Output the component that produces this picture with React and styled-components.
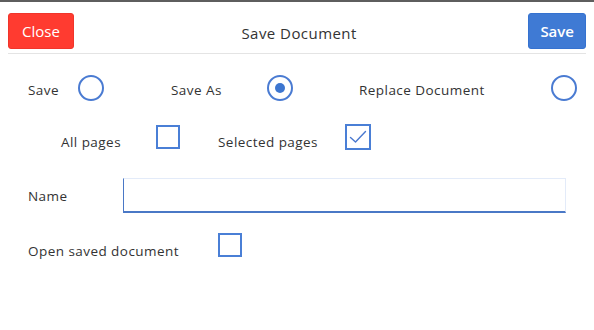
import React from "react";
import styled, { createGlobalStyle } from "styled-components";

const Global = createGlobalStyle`
  html, body { margin: 0; padding: 0; background: #ffffff; }
  body { font-family: "Open Sans", "Noto Sans", sans-serif; color: #333; }
`;

const Dialog = styled.div`
  width: 594px;
  height: 330px;
  box-sizing: border-box;
  border-top: 2px solid #5e5e5e;
  background: #fff;
  display: flex;
  flex-direction: column;
`;

const Header = styled.div`
  margin: 0 8px;
  height: 52px;
  box-sizing: border-box;
  border-bottom: 1px solid #e4e4e4;
  display: flex;
  align-items: flex-start;
  justify-content: space-between;
  padding-top: 11px;
`;

const Title = styled.div`
  font-size: 15px;
  color: #333;
  letter-spacing: 0.45px;
  padding-right: 4px;
  margin-top: 10px;
`;

const Button = styled.button`
  height: 36px;
  padding: 0 ${(p) => p.$pad}px;
  border: 1px solid ${(p) => p.$border};
  border-radius: 3px;
  background: ${(p) => p.$bg};
  color: #fff;
  font-family: "Open Sans", sans-serif;
  font-size: 15px;
  font-weight: ${(p) => p.$weight};
  cursor: pointer;
`;

const Body = styled.div`
  display: flex;
  flex-direction: column;
`;

const Row = styled.div`
  display: flex;
  align-items: center;
  height: ${(p) => p.$h}px;
  margin-top: ${(p) => p.$mt}px;
  padding-left: ${(p) => p.$pl}px;
`;

const Label = styled.span`
  font-size: 13.5px;
  color: #333;
  letter-spacing: 0.45px;
  width: ${(p) => (p.$w ? `${p.$w}px` : "auto")};
  margin-top: ${(p) => p.$dy || 0}px;
  flex-shrink: 0;
`;

const Radio = styled.span`
  width: 26px;
  height: 26px;
  box-sizing: border-box;
  border-radius: 50%;
  border: 2px solid #4a7bd2;
  display: flex;
  align-items: center;
  justify-content: center;
  flex-shrink: 0;
  margin-right: ${(p) => p.$mr}px;
  &::after {
    content: "";
    width: 10px;
    height: 10px;
    border-radius: 50%;
    background: #3d76d0;
    display: ${(p) => (p.$checked ? "block" : "none")};
  }
`;

const Box = styled.span`
  width: ${(p) => p.$size}px;
  height: ${(p) => p.$size}px;
  box-sizing: border-box;
  border: 2px solid #4a7fd6;
  display: flex;
  align-items: center;
  justify-content: center;
  flex-shrink: 0;
  margin-right: ${(p) => p.$mr || 0}px;
`;

const Input = styled.input`
  width: 443px;
  height: 35px;
  box-sizing: border-box;
  border: 1px solid #e3ebf9;
  border-left: 1px solid #4a78c6;
  border-bottom: 2px solid #4a78c6;
  outline: none;
  background: #fff;
  padding: 0 8px;
  font-family: "Open Sans", sans-serif;
  font-size: 14px;
`;

const Check = () => (
  <svg width="22" height="22" viewBox="0 0 22 22" fill="none">
    <path d="M3.5 11.5 L8.5 16 L18.5 5.5" stroke="#4a78cf" strokeWidth="1.4" strokeLinecap="round" strokeLinejoin="round" />
  </svg>
);

export default function App() {
  return (
    <>
      <Global />
      <Dialog>
        <Header>
          <Button $bg="#ff3b30" $border="#f0352b" $pad={13} $weight={500}>Close</Button>
          <Title>Save Document</Title>
          <Button $bg="#3f7ad4" $border="#3572d0" $pad={11} $weight={600}>Save</Button>
        </Header>
        <Body>
          <Row $h={26} $mt={21} $pl={28}>
            <Label $w={50} $dy={3}>Save</Label>
            <Radio $mr={67} />
            <Label $w={96} $dy={3}>Save As</Label>
            <Radio $checked $mr={66} />
            <Label $w={192} $dy={3}>Replace Document</Label>
            <Radio $mr={0} />
          </Row>
          <Row $h={24} $mt={24} $pl={61}>
            <Label $w={95} $dy={10}>All pages</Label>
            <Box $size={24} $mr={38} />
            <Label $w={127} $dy={10}>Selected pages</Label>
            <Box $size={26}><Check /></Box>
          </Row>
          <Row $h={35} $mt={29} $pl={28}>
            <Label $w={95} $dy={0}>Name</Label>
            <Input type="text" />
          </Row>
          <Row $h={24} $mt={20} $pl={28}>
            <Label $w={190} $dy={12}>Open saved document</Label>
            <Box $size={24} />
          </Row>
        </Body>
      </Dialog>
    </>
  );
}
